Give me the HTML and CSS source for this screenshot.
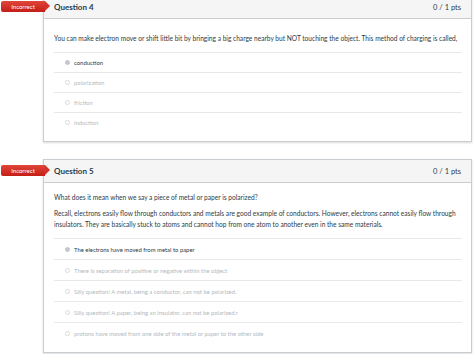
FILE: index.html
```html
<!DOCTYPE html>
<html lang="en">
<head>
  <meta charset="UTF-8">
  <title>Quiz Results</title>
  <link rel="stylesheet" href="styles.css">
</head>
<body>

  <div class="quiz">

    <div class="question first">
      <span class="badge">Incorrect</span>
      <div class="header">
        <span class="name">Question 4</span>
        <span class="pts">0 / 1 pts</span>
      </div>
      <div class="content">
        <p>You can make electron move or shift little bit by bringing a big charge nearby but NOT touching the object. This method of charging is called,</p>
        <div class="answers">
          <div class="answer selected"><span class="radio"></span>conduction</div>
          <div class="answer"><span class="radio"></span>polarization</div>
          <div class="answer"><span class="radio"></span>friction</div>
          <div class="answer"><span class="radio"></span>induction</div>
        </div>
      </div>
    </div>

    <div class="question">
      <span class="badge">Incorrect</span>
      <div class="header">
        <span class="name">Question 5</span>
        <span class="pts">0 / 1 pts</span>
      </div>
      <div class="content">
        <p>What does it mean when we say a piece of metal or paper is polarized?</p>
        <p>Recall, electrons easily flow through conductors and metals are good example of conductors. However, electrons cannot easily flow through insulators. They are basically stuck to atoms and cannot hop from one atom to another even in the same materials.</p>
        <div class="answers">
          <div class="answer selected"><span class="radio"></span>The electrons have moved from metal to paper</div>
          <div class="answer"><span class="radio"></span>There is separation of positive or negative within the object</div>
          <div class="answer"><span class="radio"></span>Silly question! A metal, being a conductor, can not be polarized.</div>
          <div class="answer"><span class="radio"></span>Silly question! A paper, being an insulator, can not be polarized.r</div>
          <div class="answer"><span class="radio"></span>protons have moved from one side of the metal or paper to the other side</div>
        </div>
      </div>
    </div>

  </div>

</body>
</html>
```

FILE: styles.css
```css
body {
  margin: 0;
  background: #fff;
  font-family: Lato, 'Open Sans', sans-serif;
  color: #2d3b45;
  overflow: hidden;
}

.quiz {
  padding-left: 43px;
  width: 429px;
}

.question {
  position: relative;
  border: 1px solid #c7cdd1;
  box-shadow: 0 1px 2px rgba(0, 0, 0, 0.15);
  margin-bottom: 18px;
}

.question.first {
  margin-top: -5px;
  margin-bottom: 17px;
}

.badge {
  position: absolute;
  left: -43px;
  top: 5px;
  width: 44px;
  height: 11px;
  line-height: 11px;
  background: linear-gradient(#e0463a, #c41e17);
  color: #fff;
  font-size: 6px;
  text-align: center;
  border-radius: 2px 0 0 2px;
}

.badge::after {
  content: "";
  position: absolute;
  right: -5px;
  top: 0;
  border-top: 5.5px solid transparent;
  border-bottom: 5.5px solid transparent;
  border-left: 5px solid #d2322a;
}

.header {
  display: flex;
  justify-content: space-between;
  align-items: center;
  height: 22px;
  padding: 0 10px;
  background: #f5f5f5;
  border-bottom: 1px solid #c7cdd1;
}

.name {
  font-weight: bold;
  font-size: 8px;
}

.pts {
  font-size: 7.5px;
}

.content {
  padding: 9px 9px 9px 10px;
}

.first .content {
  padding-top: 14px;
}

.content p {
  margin: 0 0 5px;
  font-size: 6.6px;
  line-height: 11px;
}

.answers {
  margin-top: 8px;
}

.answer {
  display: flex;
  align-items: center;
  height: 20px;
  padding-left: 11px;
  border-top: 1px solid #e6e8ea;
  font-size: 5.9px;
  color: #b4b9bd;
}

.first .answer {
  height: 19px;
}

.answer.selected {
  color: #2d3b45;
}

.radio {
  width: 3px;
  height: 3px;
  border: 1px solid #d8dbdd;
  border-radius: 50%;
  margin-right: 4px;
}

.selected .radio {
  background: #c3c7ca;
  border-color: #c3c7ca;
}
```
